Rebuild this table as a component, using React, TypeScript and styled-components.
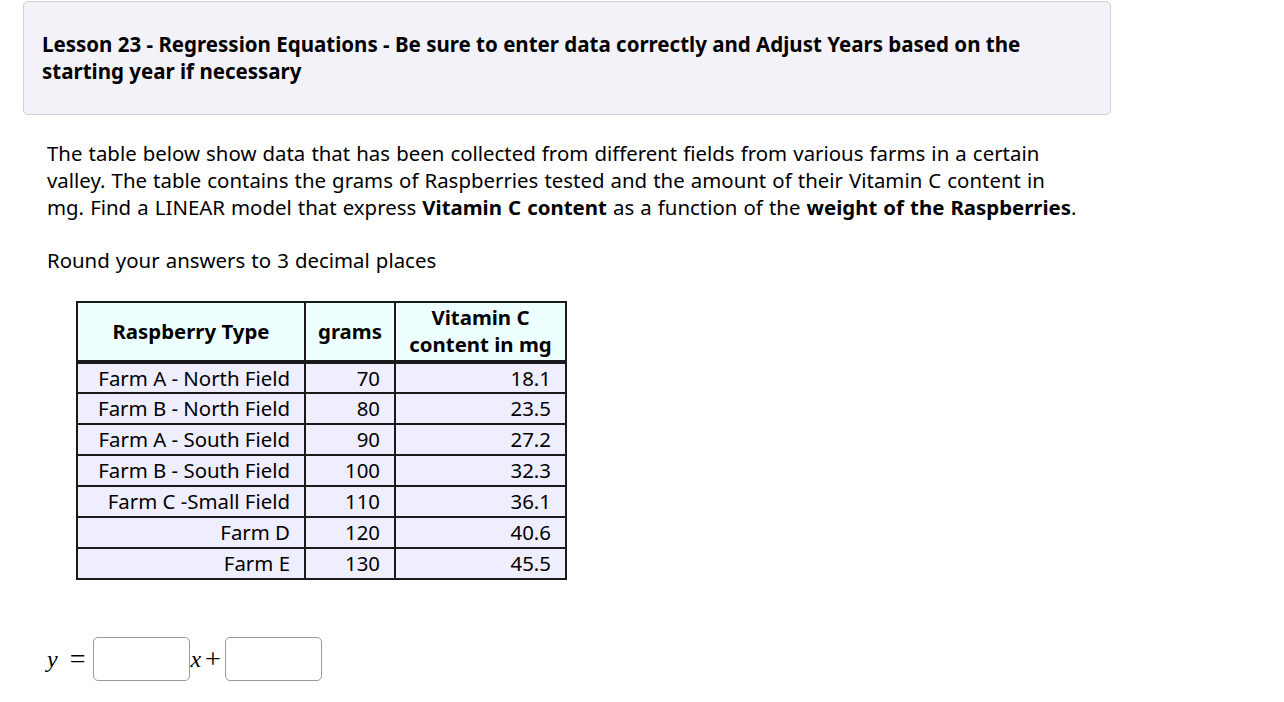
import * as React from 'react';
import styled, { createGlobalStyle } from 'styled-components';

const GlobalStyle = createGlobalStyle`
  html, body {
    margin: 0;
    padding: 0;
    background: #ffffff;
  }
  body {
    font-family: "Noto Sans", "Open Sans", sans-serif;
    color: #000000;
  }
`;

interface Row {
  type: string;
  grams: number;
  vitamin: string;
}

const rows: Row[] = [
  { type: 'Farm A - North Field', grams: 70, vitamin: '18.1' },
  { type: 'Farm B - North Field', grams: 80, vitamin: '23.5' },
  { type: 'Farm A - South Field', grams: 90, vitamin: '27.2' },
  { type: 'Farm B - South Field', grams: 100, vitamin: '32.3' },
  { type: 'Farm C -Small Field', grams: 110, vitamin: '36.1' },
  { type: 'Farm D', grams: 120, vitamin: '40.6' },
  { type: 'Farm E', grams: 130, vitamin: '45.5' },
];

const App = () => {
  return (
    <>
      <GlobalStyle />
      <Page>
        <LessonHeader>
          Lesson 23 - Regression Equations - Be sure to enter data correctly and Adjust Years based on the
          <br />
          starting year if necessary
        </LessonHeader>

        <Problem>
          <Paragraph>
            The table below show data that has been collected from different fields from various farms in a certain
            <br />
            valley. The table contains the grams of Raspberries tested and the amount of their Vitamin C content in
            <br />
            mg. Find a LINEAR model that express <b>Vitamin C content</b> as a function of the{' '}
            <b>weight of the Raspberries</b>.
          </Paragraph>

          <Paragraph>Round your answers to 3 decimal places</Paragraph>

          <DataTable>
            <thead>
              <tr>
                <HeadCell $width={228}>Raspberry Type</HeadCell>
                <HeadCell $width={90}>grams</HeadCell>
                <HeadCell $width={171}>
                  Vitamin C
                  <br />
                  content in mg
                </HeadCell>
              </tr>
            </thead>
            <tbody>
              {rows.map((row) => (
                <tr key={row.type}>
                  <Cell>{row.type}</Cell>
                  <Cell>{row.grams}</Cell>
                  <Cell>{row.vitamin}</Cell>
                </tr>
              ))}
            </tbody>
          </DataTable>

          <Equation>
            <MathVar>y</MathVar>
            <MathOp $left={12} $right={8}>=</MathOp>
            <AnswerBox aria-label="slope" />
            <MathVar>x</MathVar>
            <MathOp $left={4} $right={4}>+</MathOp>
            <AnswerBox aria-label="intercept" />
          </Equation>
        </Problem>
      </Page>
    </>
  );
};

const Page = styled.div`
  padding: 1px 0 0 23px;
  width: 1088px;
`;

const LessonHeader = styled.div`
  box-sizing: border-box;
  width: 1088px;
  height: 114px;
  padding: 29px 18px 0 18px;
  background: #f2f2f8;
  border: 1px solid #cfcfd4;
  border-radius: 5px;
  font-size: 20.5px;
  font-weight: 700;
  line-height: 27px;
  white-space: nowrap;
`;

const Problem = styled.div`
  padding: 25px 0 0 24px;
`;

const Paragraph = styled.p`
  margin: 0 0 26px 0;
  font-size: 20.4px;
  line-height: 27px;
  word-spacing: 0.8px;
  white-space: nowrap;

  b {
    font-weight: 700;
  }

  & + & {
    margin-bottom: 27px;
  }
`;

const DataTable = styled.table`
  margin: 0 0 0 29px;
  border-collapse: collapse;
  border: 2px solid #1a1a1a;
  font-size: 20.4px;
  line-height: 27px;
`;

const HeadCell = styled.th<{ $width: number }>`
  width: ${(p) => p.$width}px;
  min-width: ${(p) => p.$width}px;
  max-width: ${(p) => p.$width}px;
  box-sizing: border-box;
  height: 60px;
  padding: 1px 0 2px;
  background: #eeffff;
  border: 2px solid #1a1a1a;
  border-bottom: 4px solid #1a1a1a;
  font-weight: 700;
  text-align: center;
  vertical-align: middle;
  white-space: nowrap;
`;

const Cell = styled.td`
  height: 31px;
  box-sizing: border-box;
  padding: 0 14px 0 0;
  background: #eeeeff;
  border: 2px solid #1a1a1a;
  text-align: right;
  vertical-align: middle;
  white-space: nowrap;
`;

const Equation = styled.div`
  display: flex;
  align-items: center;
  margin-top: 57px;
  height: 44px;
`;

const MathVar = styled.span`
  font-family: "Liberation Serif", serif;
  font-style: italic;
  font-size: 24px;
`;

const MathOp = styled.span<{ $left: number; $right: number }>`
  font-family: "Liberation Serif", serif;
  font-size: 28px;
  line-height: 1;
  margin: 0 ${(p) => p.$right}px 0 ${(p) => p.$left}px;
`;

const AnswerBox = styled.input.attrs({ type: 'text' })`
  box-sizing: border-box;
  width: 97px;
  height: 44px;
  margin: 0;
  border: 1px solid #9a9a9a;
  border-radius: 5px;
  background: #ffffff;
  outline: none;
`;

export default App;
